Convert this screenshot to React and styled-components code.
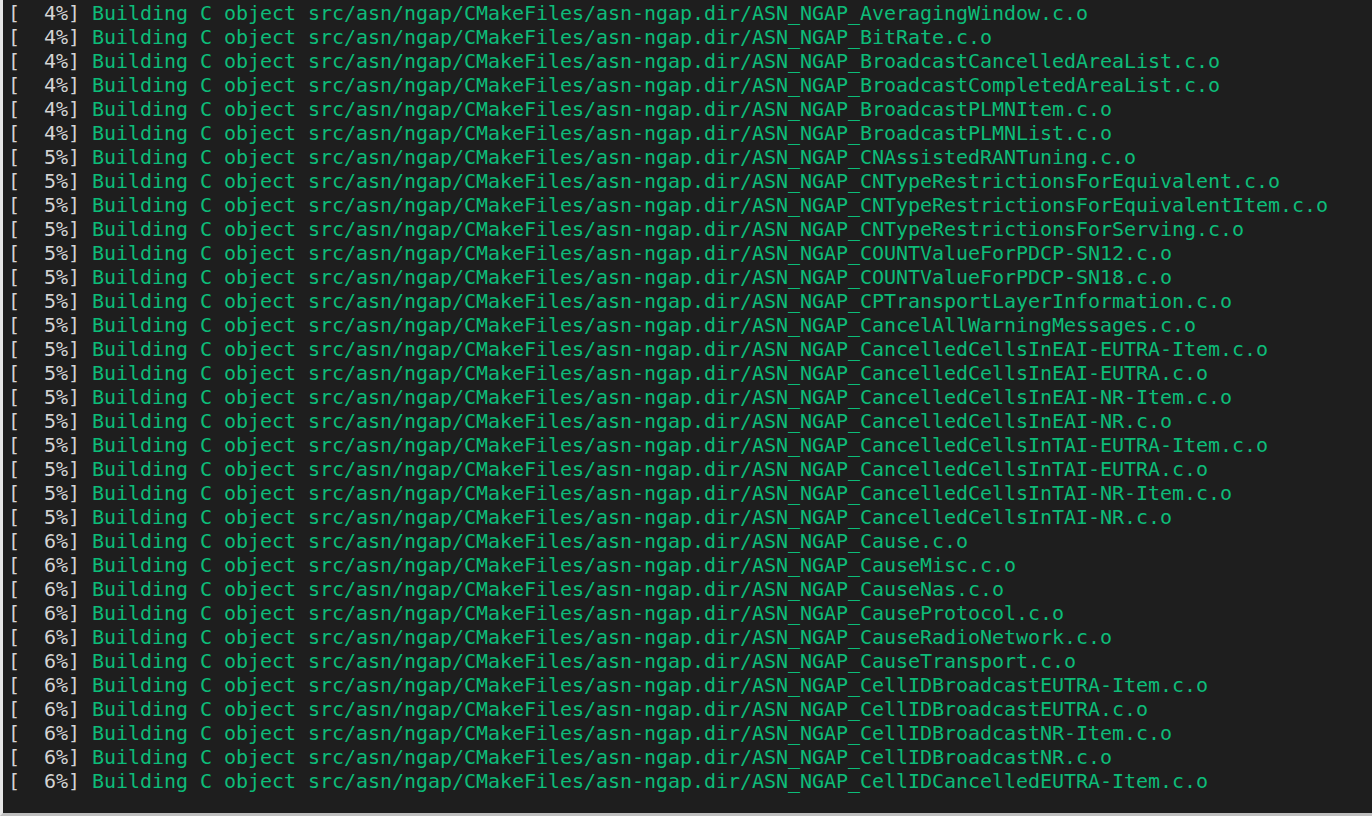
import React from 'react';
import styled, { createGlobalStyle } from 'styled-components';

const GlobalStyle = createGlobalStyle`
  html, body {
    margin: 0;
    padding: 0;
    background: #1e1e1e;
    overflow: hidden;
  }
`;

const Terminal = styled.div`
  box-sizing: border-box;
  width: 1372px;
  height: 816px;
  background: #1e1e1e;
  border-left: 3px solid #e6e6e6;
  border-bottom: 3px solid #bfbfbf;
  padding: 1px 0 0 5px;
  overflow: hidden;
`;

const Line = styled.div`
  font-family: "DejaVu Sans Mono", "Liberation Mono", monospace;
  font-size: 20px;
  letter-spacing: -0.04px;
  line-height: 24px;
  height: 24px;
  white-space: pre;
`;

const Progress = styled.span`
  color: #d4d4d4;
`;

const Message = styled.span`
  color: #0dbc79;
`;

const groups = [
  ['4', ['AveragingWindow', 'BitRate', 'BroadcastCancelledAreaList', 'BroadcastCompletedAreaList', 'BroadcastPLMNItem', 'BroadcastPLMNList']],
  ['5', ['CNAssistedRANTuning', 'CNTypeRestrictionsForEquivalent', 'CNTypeRestrictionsForEquivalentItem', 'CNTypeRestrictionsForServing', 'COUNTValueForPDCP-SN12', 'COUNTValueForPDCP-SN18', 'CPTransportLayerInformation', 'CancelAllWarningMessages', 'CancelledCellsInEAI-EUTRA-Item', 'CancelledCellsInEAI-EUTRA', 'CancelledCellsInEAI-NR-Item', 'CancelledCellsInEAI-NR', 'CancelledCellsInTAI-EUTRA-Item', 'CancelledCellsInTAI-EUTRA', 'CancelledCellsInTAI-NR-Item', 'CancelledCellsInTAI-NR']],
  ['6', ['Cause', 'CauseMisc', 'CauseNas', 'CauseProtocol', 'CauseRadioNetwork', 'CauseTransport', 'CellIDBroadcastEUTRA-Item', 'CellIDBroadcastEUTRA', 'CellIDBroadcastNR-Item', 'CellIDBroadcastNR', 'CellIDCancelledEUTRA-Item']],
];

const lines = groups.flatMap(([pct, names]) => names.map((n) => ({ pct, name: n })));

export default function App() {
  return (
    <>
      <GlobalStyle />
      <Terminal>
        {lines.map((l, i) => (
          <Line key={i}>
            <Progress>{`[  ${l.pct}%]`}</Progress>
            <Message>{` Building C object src/asn/ngap/CMakeFiles/asn-ngap.dir/ASN_NGAP_${l.name}.c.o`}</Message>
          </Line>
        ))}
      </Terminal>
    </>
  );
}
